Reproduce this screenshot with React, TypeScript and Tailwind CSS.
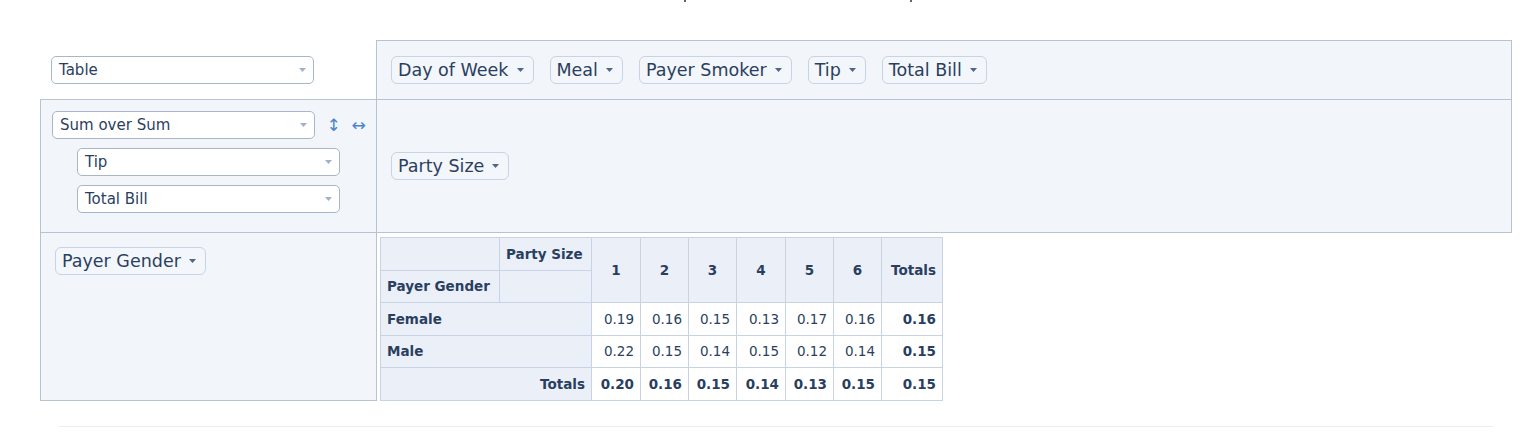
import React from 'react';

const cols = ['1', '2', '3', '4', '5', '6'];

const rows = [
  { label: 'Female', vals: ['0.19', '0.16', '0.15', '0.13', '0.17', '0.16'], total: '0.16' },
  { label: 'Male', vals: ['0.22', '0.15', '0.14', '0.15', '0.12', '0.14'], total: '0.15' },
];

const colTotals = { vals: ['0.20', '0.16', '0.15', '0.14', '0.13', '0.15'], total: '0.15' };

const Caret = ({ className }: { className: string }) => (
  <svg width="7" height="4" viewBox="0 0 7 4" className={className}>
    <path d="M0 0h7L3.5 4z" fill="currentColor" />
  </svg>
);

const Dropdown = ({ label }: { label: string }) => (
  <div className="flex h-[28px] w-[263px] items-center justify-between rounded-[5px] border border-[#a9b6ca] bg-white pl-[7px] pr-[7px] text-[15px] text-[#2a3f5f]">
    <span>{label}</span>
    <Caret className="text-[#a2b1c6]" />
  </div>
);

const Pill = ({ label }: { label: string }) => (
  <span className="inline-flex h-[28px] items-center gap-[8px] whitespace-nowrap rounded-[6px] border border-[#c8d4e3] bg-[#f3f6fa] pl-[6px] pr-[9px] text-[17.5px] text-[#2a3f5f]">
    {label}
    <Caret className="text-[#506784]" />
  </span>
);

const th = 'border border-[#c8d4e3] bg-[#ebf0f8] px-[6px] font-bold';
const td = 'border border-[#c8d4e3] bg-white px-[6px] text-right';

const PivotTable = () => (
  <table className="ml-[4px] mt-[5px] w-[562px] table-fixed border-collapse text-[13.5px] text-[#2a3f5f]">
    <colgroup>
      <col className="w-[119px]" />
      <col className="w-[92px]" />
      <col className="w-[49px]" />
      <col className="w-[48px]" />
      <col className="w-[48px]" />
      <col className="w-[49px]" />
      <col className="w-[48px]" />
      <col className="w-[48px]" />
      <col className="w-[61px]" />
    </colgroup>
    <thead>
      <tr className="h-[32.6px]">
        <th className={th}></th>
        <th className={`${th} text-left`}>Party Size</th>
        {cols.map((c) => (
          <th key={c} rowSpan={2} className={`${th} text-center`}>
            {c}
          </th>
        ))}
        <th rowSpan={2} className={`${th} text-right`}>
          Totals
        </th>
      </tr>
      <tr className="h-[32.6px]">
        <th className={`${th} text-left`}>Payer Gender</th>
        <th className={th}></th>
      </tr>
    </thead>
    <tbody>
      {rows.map((r) => (
        <tr key={r.label} className="h-[32.6px]">
          <th colSpan={2} className={`${th} text-left`}>
            {r.label}
          </th>
          {r.vals.map((v, i) => (
            <td key={i} className={td}>
              {v}
            </td>
          ))}
          <td className={`${td} font-bold`}>{r.total}</td>
        </tr>
      ))}
      <tr className="h-[32.6px]">
        <th colSpan={2} className={`${th} text-right`}>
          Totals
        </th>
        {colTotals.vals.map((v, i) => (
          <td key={i} className={`${td} font-bold`}>
            {v}
          </td>
        ))}
        <td className={`${td} font-bold`}>{colTotals.total}</td>
      </tr>
    </tbody>
  </table>
);

export default function App() {
  const box = 'border border-[#b7c2d3] bg-[#f2f5fa]';

  return (
    <div className="min-h-[435px] bg-white font-['DejaVu_Sans',sans-serif] text-[#2a3f5f]">
      {/* bits of the line above, cut off by the top edge */}
      <div className="flex h-[3px] items-start">
        <span className="ml-[684px] h-[2px] w-[2px] bg-[#666]" />
        <span className="ml-[224px] h-[2px] w-[2px] bg-[#666]" />
      </div>

      <div className="ml-[40px] mt-[37px] grid grid-cols-[337px_1135px] grid-rows-[60px_133px_auto]">
        {/* renderer */}
        <div className="flex items-center pl-[11px]">
          <Dropdown label="Table" />
        </div>

        {/* unused attributes */}
        <div className={`${box} -ml-px flex items-center gap-[16px] pl-[14px]`}>
          <Pill label="Day of Week" />
          <Pill label="Meal" />
          <Pill label="Payer Smoker" />
          <Pill label="Tip" />
          <Pill label="Total Bill" />
        </div>

        {/* aggregator */}
        <div className={`${box} -mt-px flex flex-col gap-[9px] pl-[11px] pt-[11px]`}>
          <div className="flex items-center">
            <Dropdown label="Sum over Sum" />
            <span className="ml-[9px] w-[19px] text-center text-[17px] leading-none text-[#4a84cc]">↕</span>
            <span className="ml-[6px] w-[19px] text-center text-[17px] leading-none text-[#4a84cc]">↔</span>
          </div>
          <div className="pl-[25px]">
            <Dropdown label="Tip" />
          </div>
          <div className="pl-[25px]">
            <Dropdown label="Total Bill" />
          </div>
        </div>

        {/* column attributes */}
        <div className={`${box} -ml-px -mt-px flex items-center pl-[14px]`}>
          <Pill label="Party Size" />
        </div>

        {/* row attributes */}
        <div className={`${box} -mt-px pl-[14px] pt-[14px]`}>
          <Pill label="Payer Gender" />
        </div>

        {/* output */}
        <div className="-ml-px -mt-px">
          <PivotTable />
        </div>
      </div>

      <div className="ml-[59px] mt-[25px] w-[1434px] border-t border-[#ececec]" />
    </div>
  );
}
